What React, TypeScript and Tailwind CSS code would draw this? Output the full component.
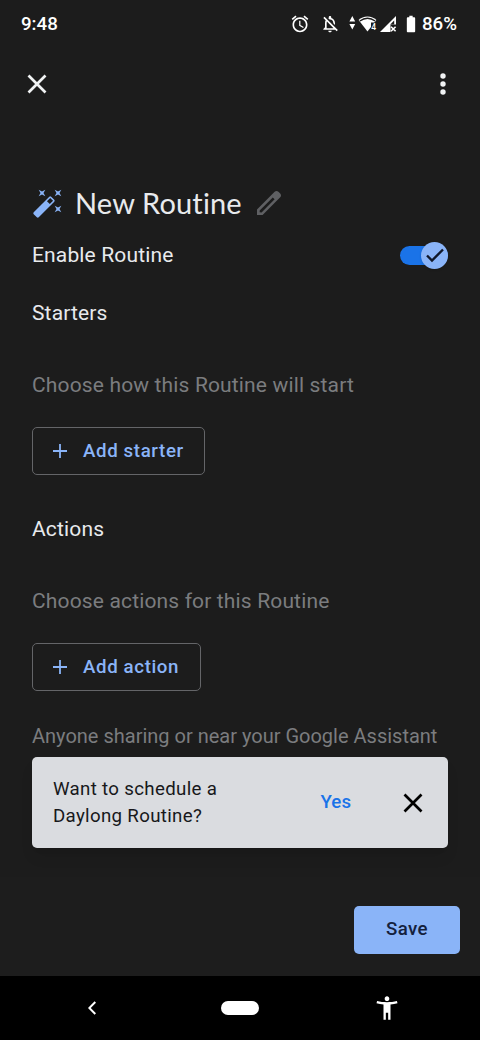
import {
  MdAccessibilityNew,
  MdAutoFixHigh,
  MdBatteryFull,
  MdOutlineNotificationsOff,
} from "react-icons/md";

const StatusBar = () => (
  <div className="flex items-center justify-between h-12 pl-[21px] pr-[23px] text-[18.7px] font-medium text-white">
    <p>9:48</p>

    <div className="flex items-center">
      <svg viewBox="0 0 24 24" className="size-5 mr-[10px]" fill="#fff">
        <path d="M22 5.72l-4.6-3.86-1.29 1.53 4.6 3.86L22 5.72zM7.88 3.39L6.6 1.86 2 5.71l1.29 1.53 4.59-3.85zM12.5 8H11v6l4.75 2.85.75-1.23-4-2.37V8zM12 4c-4.97 0-9 4.03-9 9s4.02 9 9 9c4.97 0 9-4.03 9-9s-4.03-9-9-9zm0 16c-3.87 0-7-3.13-7-7s3.13-7 7-7 7 3.13 7 7-3.13 7-7 7z" />
      </svg>
      <MdOutlineNotificationsOff className="size-5 mr-[9px]" />
      <svg viewBox="0 0 48 20" className="w-12 h-5 mr-1" fill="#fff">
        <path d="M3.300 2 6.200 7.500H.4zM3.300 15.500 6.200 10H.4z" />
        <path d="M9.600 6C14 1.200 23 1.200 27.400 6L18.500 17.500z" />
        <path d="M10.800 7C15.500 3.600 21.500 3.600 26.200 7" fill="none" stroke="#1c1c1c" strokeWidth="1.300" />
        <path d="M22 8.500H28V17H22z" fill="#1c1c1c" />
        <text x="22.200" y="15.500" fontSize="8.500" fontFamily="Roboto" fontWeight="500">4</text>
        <path d="M47 2V10.500H41.500V18H31z" />
        <path d="M45.200 6.500V10.500H41.500V10.200z" fill="#1c1c1c" />
        <path d="m42 12.700 4.600 4.600m0-4.600L42 17.300" stroke="#fff" strokeWidth="1.600" />
      </svg>
      <MdBatteryFull className="size-5 mr-[1px]" />
      <p>86%</p>
    </div>
  </div>
);

const Close = ({ className = "" }) => (
  <svg viewBox="0 0 20 20" className={className} fill="none" stroke="currentColor">
    <path d="m1.500 1.500 17 17m0-17-17 17" strokeWidth="2.700" />
  </svg>
);

const AddButton = ({ label = "", className = "" }) => (
  <button
    className={`flex items-center h-12 pl-5 rounded-[5px] border border-[#646568] text-[#8ab4f8] ${className}`}
  >
    <svg viewBox="0 0 14 14" className="size-3.5 mr-4" fill="none" stroke="currentColor">
      <path d="M7 0v14M0 7h14" strokeWidth="1.800" />
    </svg>
    <span className="text-[18.7px] font-medium tracking-[0.62px] whitespace-nowrap">
      {label}
    </span>
  </button>
);

const Routine = () => (
  <main className="flex flex-col h-[757px] overflow-hidden px-8 pt-[63px] text-[21px] leading-7 text-[#e8eaed]">
    <div className="flex items-center h-10">
      <MdAutoFixHigh className="size-8 text-[#8ab4f8]" />
      <h1 className="w-[178px] ml-[11px] font-['Lato'] text-[29px] tracking-[0.15px] whitespace-nowrap">
        New Routine
      </h1>
      <svg viewBox="0 0 24 24" className="size-8" fill="#5f6063">
        <path d="M20.410 4.940l-1.350-1.350c-.78-.78-2.050-.78-2.830 0L3 16.820V21h4.180L20.410 7.770c.79-.78.79-2.050 0-2.830zM6.410 19.060L5 19v-1.360l9.820-9.820 1.410 1.410-9.820 9.830z" />
      </svg>
    </div>

    <div className="flex items-center justify-between mt-[18px]">
      <p className="tracking-[0.15px]">Enable Routine</p>
      <div className="flex items-center justify-end w-12 h-[19px] rounded-full bg-[#1a73e8]">
        <div className="flex items-center justify-center size-[27px] rounded-full shrink-0 bg-[#8ab4f8] shadow">
          <svg viewBox="0 0 20 20" className="size-5" fill="none" stroke="#10182b" strokeWidth="2.400">
            <path d="m2 10.500 5 5L18 4.500" />
          </svg>
        </div>
      </div>
    </div>

    <h2 className="mt-[30px] tracking-[0.15px]">Starters</h2>
    <p className="mt-11 text-[#7b7c7f] tracking-[0.15px]">Choose how this Routine will start</p>
    <AddButton label="Add starter" className="mt-7 w-[173px] shrink-0" />

    <h2 className="mt-10 tracking-[0.15px]">Actions</h2>
    <p className="mt-11 text-[#7b7c7f] tracking-[0.15px]">Choose actions for this Routine</p>
    <AddButton label="Add action" className="mt-7 w-[169px] shrink-0" />

    <p className="mt-[31px] text-[20px] text-[#7b7c7f] whitespace-nowrap">
      Anyone sharing or near your Google Assistant
    </p>
  </main>
);

const Snackbar = () => (
  <div className="absolute left-8 top-[757px] flex items-center w-[416px] h-[91px] pl-[21px] pr-[25px] rounded-[5px] bg-[#dadce0] text-[#17181b] shadow-lg">
    <p className="text-[18.7px] leading-[27px] tracking-[0.32px]">
      Want to schedule a<br />
      Daylong Routine?
    </p>
    <button className="ml-auto mr-[52px] text-[18.7px] font-medium text-[#1a73e8]">Yes</button>
    <Close className="size-5 text-black" />
  </div>
);

export default function App() {
  return (
    <div className="relative flex flex-col w-[480px] h-[1040px] overflow-hidden bg-[#1c1c1c] font-['Roboto',sans-serif]">
      <StatusBar />
      <header className="flex items-center justify-between h-[72px] pl-[27px] pr-[34.500px] text-[#f1f3f4]">
        <Close className="size-5" />
        <svg viewBox="0 0 6 22" className="w-1.5 h-[22px]" fill="currentColor">
          <circle cx="3" cy="3" r="2.700" />
          <circle cx="3" cy="11" r="2.700" />
          <circle cx="3" cy="19" r="2.700" />
        </svg>
      </header>
      <Routine />
      <Snackbar />

      <footer className="flex items-center justify-end h-[99px] shrink-0 pr-5 pt-1.5 bg-[#1d1d1d]">
        <button className="w-[106px] h-12 rounded-[5px] bg-[#8ab4f8] text-[18.7px] font-medium tracking-[0.4px] text-[#14213d]">
          Save
        </button>
      </footer>

      <nav className="flex items-center h-16 shrink-0 pl-[88px] bg-black text-white">
        <svg viewBox="0 0 8 14" className="w-2 h-3.5" fill="none" stroke="currentColor" strokeWidth="2">
          <path d="M7.300 1 1.300 7l6 6" />
        </svg>
        <div className="w-[38px] h-3.5 ml-[125px] rounded-full bg-white" />
        <MdAccessibilityNew className="size-7 ml-[114px]" />
      </nav>
    </div>
  );
}
